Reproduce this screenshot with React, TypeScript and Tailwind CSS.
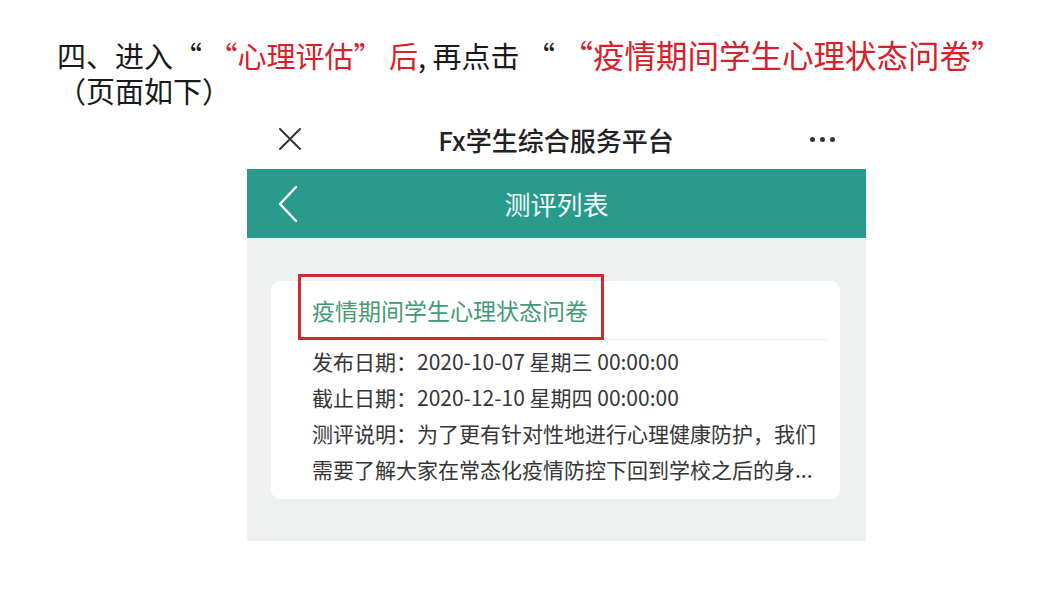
import React from "react";

const cjk = { fontFamily: '"Noto Sans CJK SC", "Noto Sans", sans-serif' };

function CloseIcon() {
  return (
    <svg width="24" height="24" viewBox="0 0 24 24" fill="none" stroke="#333" strokeWidth="2" strokeLinecap="round">
      <path d="M2 2 L22 22 M22 2 L2 22" />
    </svg>
  );
}

function MoreIcon() {
  return (
    <div className="flex items-center gap-[5px]">
      <span className="block w-[5px] h-[5px] rounded-full bg-[#333]" />
      <span className="block w-[5px] h-[5px] rounded-full bg-[#333]" />
      <span className="block w-[5px] h-[5px] rounded-full bg-[#333]" />
    </div>
  );
}

function BackIcon() {
  return (
    <svg width="22" height="38" viewBox="0 0 22 38" fill="none" stroke="#ffffff" strokeWidth="2.4" strokeLinecap="round" strokeLinejoin="round">
      <path d="M19 2 L3 19 L19 36" />
    </svg>
  );
}

export default function App() {
  return (
    <div className="w-[1057px] h-[595px] bg-white overflow-hidden" style={cjk}>
      {/* Instruction heading */}
      <div className="pl-[57px] pt-[37px] text-[29px] leading-[35px] font-normal text-[#1a1a1a]">
        <div className="whitespace-nowrap">
          四、进入“ <span className="text-[#d7202a]">“心理评估” 后</span>, 再点击 “ <span className="text-[#d7202a] text-[31.5px]">“疫情期间学生心理状态问卷”</span>
        </div>
        <div>（页面如下）</div>
      </div>

      {/* Phone screen */}
      <div className="ml-[247px] mt-[8px] w-[619px]">
        {/* Top bar */}
        <div className="h-[53px] pb-[7px] flex items-center justify-between px-[31px] bg-white">
          <CloseIcon />
          <div className="text-[26px] font-medium text-[#222]">Fx学生综合服务平台</div>
          <MoreIcon />
        </div>

        {/* Teal header */}
        <div className="relative h-[69px] bg-[#2a9a8c] flex items-center justify-center">
          <div className="absolute left-[30px] top-[16px]">
            <BackIcon />
          </div>
          <div className="text-[26px] text-[#f2fbf9]">测评列表</div>
        </div>

        {/* List area */}
        <div className="h-[303px] bg-[#eff1f0] pt-[43px] pl-[24px] pr-[26px]">
          <div className="relative bg-white rounded-[9px] h-[218px]">
            <div className="h-[58px] flex items-center pl-[41px] text-[23px] text-[#3f9b74]">
              疫情期间学生心理状态问卷
            </div>
            <div className="ml-[29px] mr-[13px] h-px bg-[#ececec]" />
            <div className="pt-[3px] pl-[41px] text-[21px] leading-[36px] text-[#363636]">
              <div>发布日期：2020-10-07 星期三 00:00:00</div>
              <div>截止日期：2020-12-10 星期四 00:00:00</div>
              <div className="whitespace-nowrap">测评说明：为了更有针对性地进行心理健康防护，我们</div>
              <div className="whitespace-nowrap">需要了解大家在常态化疫情防控下回到学校之后的身...</div>
            </div>
            {/* Highlight frame around the title */}
            <div className="absolute left-[27px] top-[-7px] w-[306px] h-[66px] border-[3px] border-[#d12a2e]" />
          </div>
        </div>
      </div>
    </div>
  );
}
